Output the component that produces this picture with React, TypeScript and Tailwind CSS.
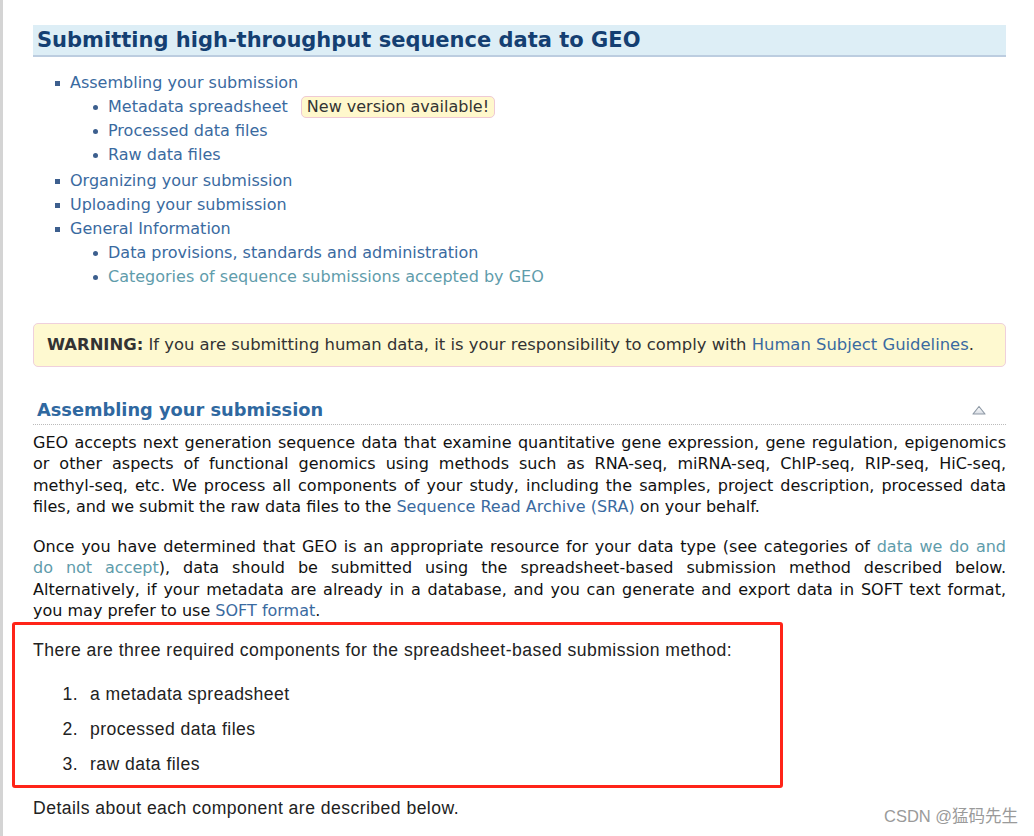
import React from 'react';

const link = 'text-[#3a6aa0]';
const visited = 'text-[#5f9cab]';

const Square = () => <span className="inline-block w-[5px] h-[5px] bg-[#3d5f8e] shrink-0" />;
const Disc = () => <span className="inline-block w-[5px] h-[5px] rounded-full bg-[#3d5f8e] shrink-0" />;

const TopItem = ({ children }: { children: React.ReactNode }) => (
  <li className="flex items-center h-[24px]">
    <span className="w-[22px] shrink-0" />
    <Square />
    <span className="w-[10px] shrink-0" />
    {children}
  </li>
);

const SubItem = ({ children }: { children: React.ReactNode }) => (
  <li className="flex items-center h-[24px]">
    <span className="w-[60px] shrink-0" />
    <Disc />
    <span className="w-[10px] shrink-0" />
    {children}
  </li>
);

// one justified line of a paragraph, wrapped where the original wraps
const Line = ({ children, last }: { children: React.ReactNode; last?: boolean }) => (
  <span className={last ? 'block' : 'block text-justify [text-align-last:justify]'}>{children}</span>
);

export default function App() {
  return (
    <div className="relative min-h-[836px] bg-white border-l-[3px] border-[#d4d4d4] font-['DejaVu_Sans',Verdana,sans-serif]">
      <div className="ml-[30px] w-[973px] pt-[25px]">
        {/* Page title */}
        <h1 className="h-[32px] bg-[#ddeef6] border-b-2 border-[#bccde0] px-[4px] text-[21px] leading-[31px] font-bold text-[#143f72]">
          Submitting high-throughput sequence data to GEO
        </h1>

        {/* Table of contents */}
        <ul className={`mt-[14px] text-[16px] ${link}`}>
          <TopItem>Assembling your submission</TopItem>
          <SubItem>
            Metadata spreadsheet
            <span className="ml-[13px] px-[5px] h-[22px] leading-[20px] rounded-[5px] border border-[#efc9d4] bg-[#fff8cc] text-[#333]">
              New version available!
            </span>
          </SubItem>
          <SubItem>Processed data files</SubItem>
          <SubItem>Raw data files</SubItem>
          <div className="h-[2px]" />
          <TopItem>Organizing your submission</TopItem>
          <TopItem>Uploading your submission</TopItem>
          <TopItem>General Information</TopItem>
          <SubItem>Data provisions, standards and administration</SubItem>
          <SubItem>
            <span className={visited}>Categories of sequence submissions accepted by GEO</span>
          </SubItem>
        </ul>

        {/* Warning */}
        <div className="mt-[34px] h-[44px] flex items-center px-[13px] rounded-[5px] border border-[#efd0dc] bg-[#fef9d0] text-[16.4px] text-[#333]">
          <span className="font-bold">WARNING:</span>
          <span>&nbsp;If you are submitting human data, it is your responsibility to comply with&nbsp;</span>
          <span className={link}>Human Subject Guidelines</span>.
        </div>

        {/* Section header */}
        <div className="mt-[31px] flex items-end justify-between border-b border-dotted border-[#bbbbbb] pb-[2px] pl-[4px] pr-[20px]">
          <h2 className="text-[17.8px] leading-[24px] font-bold text-[#2f68a0]">Assembling your submission</h2>
          <svg width="14" height="10" viewBox="0 0 14 10" className="mb-[7px]">
            <defs>
              <linearGradient id="tri" x1="0" y1="0" x2="0" y2="1">
                <stop offset="0" stopColor="#ffffff" />
                <stop offset="1" stopColor="#d8dde4" />
              </linearGradient>
            </defs>
            <path d="M1 9 L7 1.5 L13 9 Z" fill="url(#tri)" stroke="#8f9aa6" strokeWidth="1.2" strokeLinejoin="round" />
          </svg>
        </div>

        <div className="text-[16px] leading-[21.3px] text-[#111]">
          <p className="mt-[7px]">
            <Line>GEO accepts next generation sequence data that examine quantitative gene expression, gene regulation, epigenomics</Line>
            <Line>or other aspects of functional genomics using methods such as RNA-seq, miRNA-seq, ChIP-seq, RIP-seq, HiC-seq,</Line>
            <Line>methyl-seq, etc. We process all components of your study, including the samples, project description, processed data</Line>
            <Line last>
              files, and we submit the raw data files to the <span className={link}>Sequence Read Archive (SRA)</span> on your behalf.
            </Line>
          </p>
          <p className="mt-[19px]">
            <Line>
              Once you have determined that GEO is an appropriate resource for your data type (see categories of{' '}
              <span className={visited}>data we do and</span>
            </Line>
            <Line>
              <span className={visited}>do not accept</span>), data should be submitted using the spreadsheet-based submission method described below.
            </Line>
            <Line>Alternatively, if your metadata are already in a database, and you can generate and export data in SOFT text format,</Line>
            <Line last>
              you may prefer to use <span className={link}>SOFT format</span>.
            </Line>
          </p>
        </div>

        {/* Highlighted block */}
        <div className="ml-[-21px] mt-[1px] w-[771px] border-[3px] border-[#ff2418] rounded-[3px] pl-[18px] pt-[14px] pb-[10px] font-['Liberation_Sans',Arial,sans-serif] text-[17.6px] tracking-[0.45px] text-[#222]">
          <p className="leading-[22px]">There are three required components for the spreadsheet-based submission method:</p>
          <ol className="mt-[22px] flex flex-col gap-[13px]">
            {['a metadata spreadsheet', 'processed data files', 'raw data files'].map((t, i) => (
              <li key={t} className="flex leading-[22px]">
                <span className="w-[57px] text-right pr-[12px] shrink-0">{i + 1}.</span>
                <span>{t}</span>
              </li>
            ))}
          </ol>
        </div>

        <p className="mt-[9px] leading-[22px] font-['Liberation_Sans',Arial,sans-serif] text-[17.6px] tracking-[0.45px] text-[#222]">
          Details about each component are described below.
        </p>
      </div>

      <div className="absolute left-[881px] top-[805px] text-[16.5px] leading-[22px] text-[#9a9a9a] font-['Liberation_Sans','Noto_Sans_CJK_SC',sans-serif]">
        CSDN @猛码先生
      </div>
    </div>
  );
}
